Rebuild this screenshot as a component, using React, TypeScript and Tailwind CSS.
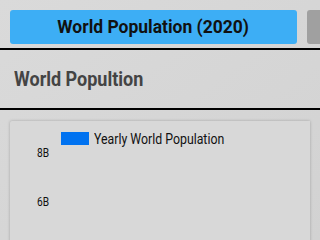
export default function App() {
  return (
    <div className="h-[240px] w-[320px] overflow-hidden bg-gradient-to-br from-[#dadada] to-[#d2d2d2] font-['Roboto',sans-serif]">
      {/* Tabs */}
      <div className="flex gap-[10px] px-[10px] pt-[10px] pb-[4px]">
        <button className="flex h-[34px] w-[287px] shrink-0 items-center justify-center rounded-[3px] bg-[#3daef5] text-[#111]">
          <span className="inline-block scale-x-[0.92] whitespace-nowrap text-[19px] font-bold">World Population (2020)</span>
        </button>
        <button className="h-[34px] w-[60px] shrink-0 rounded-[3px] bg-[#a0a0a0]" />
      </div>
      <div className="h-[2px] bg-black" />

      {/* Header */}
      <div className="flex h-[58px] items-center px-[14px]">
        <h1 className="origin-left scale-x-[0.9] whitespace-nowrap text-[20px] font-bold text-[#444]">World Popultion</h1>
      </div>
      <div className="h-[2px] bg-black" />

      {/* Chart card */}
      <div className="px-[10px] pt-[11px]">
        <div className="h-[200px] rounded-tl-[2px] bg-[#d8d8d8] pt-[11px] shadow-[0_0_3px_rgba(0,0,0,0.25)]">
          <div className="flex h-[13px] items-center gap-[5px] pl-[51px]">
            <span className="h-[13px] w-[28px] shrink-0 bg-[#0072f0]" />
            <span className="origin-left scale-x-[0.88] whitespace-nowrap text-[14px] leading-none text-[#111]">Yearly World Population</span>
          </div>
          <div className="flex flex-col items-start gap-[37px] pl-[27px] pt-[2px]">
            <span className="origin-left scale-x-[0.85] text-[12px] leading-[12px] text-[#111]">8B</span>
            <span className="origin-left scale-x-[0.85] text-[12px] leading-[12px] text-[#111]">6B</span>
          </div>
        </div>
      </div>
    </div>
  );
}
